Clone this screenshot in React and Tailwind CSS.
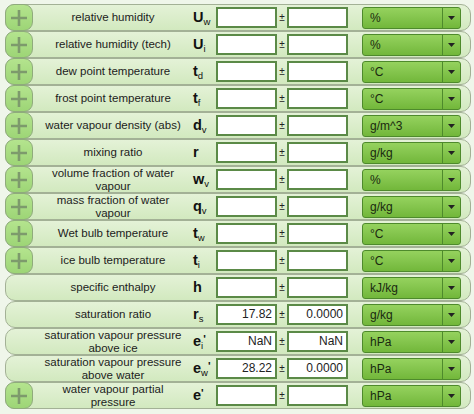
import React from "react";

const rows = [
  { label: "relative humidity", sym: "U", sub: "w", unit: "%", plus: true },
  { label: "relative humidity (tech)", sym: "U", sub: "i", unit: "%", plus: true },
  { label: "dew point temperature", sym: "t", sub: "d", unit: "°C", plus: true },
  { label: "frost point temperature", sym: "t", sub: "f", unit: "°C", plus: true },
  { label: "water vapour density (abs)", sym: "d", sub: "v", unit: "g/m^3", plus: true },
  { label: "mixing ratio", sym: "r", sub: "", unit: "g/kg", plus: true },
  { label: "volume fraction of water vapour", sym: "w", sub: "v", unit: "%", plus: true },
  { label: "mass fraction of water vapour", sym: "q", sub: "v", unit: "g/kg", plus: true },
  { label: "Wet bulb temperature", sym: "t", sub: "w", unit: "°C", plus: true },
  { label: "ice bulb temperature", sym: "t", sub: "i", unit: "°C", plus: true },
  { label: "specific enthalpy", sym: "h", sub: "", unit: "kJ/kg" },
  { label: "saturation ratio", sym: "r", sub: "s", unit: "g/kg", val: "17.82", err: "0.0000" },
  { label: "saturation vapour pressure above ice", sym: "e", sub: "i", prime: true, unit: "hPa", val: "NaN", err: "NaN" },
  { label: "saturation vapour pressure above water", sym: "e", sub: "w", prime: true, unit: "hPa", val: "28.22", err: "0.0000" },
  { label: "water vapour partial pressure", sym: "e", sub: "", prime: true, unit: "hPa", plus: true },
];

function PlusButton() {
  return (
    <div className="w-[28px] h-[27px] -my-px -ml-px rounded-[9px] border border-[#8fab7c] bg-gradient-to-b from-[#b4e48e] to-[#9dd576] flex items-center justify-center shrink-0">
      <svg width="18" height="18" viewBox="0 0 18 18">
        <path d="M9 1v16M1 9h16" stroke="#7d9a6c" strokeWidth="2.6" />
      </svg>
    </div>
  );
}

function Row({ r }) {
  return (
    <div className="h-[27px] rounded-[10px] border border-[#a3b196] bg-gradient-to-b from-[#e4f2d7] to-[#d2e9bf] flex items-center">
      {r.plus ? <PlusButton /> : <div className="w-[27px] shrink-0" />}
      <div className="ml-[5px] w-[150px] shrink-0 text-center text-[11.5px] leading-[13px] text-[#1c1c1c] px-[5px]">
        {r.label}
      </div>
      <div className="ml-[5px] w-[23px] shrink-0 text-[14.5px] font-bold text-[#111] leading-none whitespace-nowrap">
        {r.sym}
        {r.sub && <sub className="text-[9.5px] font-normal">{r.sub}</sub>}
        {r.prime && <span className="text-[11px] align-top">'</span>}
      </div>
      <div className="w-[61px] h-[21px] border-2 border-[#5b8a47] bg-white text-right text-[12px] leading-[17px] pr-[3px] text-[#222]">
        {r.val}
      </div>
      <div className="w-[10px] text-center text-[10px] text-[#222]">±</div>
      <div className="w-[61px] h-[21px] border-2 border-[#5b8a47] bg-white text-right text-[12px] leading-[17px] pr-[3px] text-[#222]">
        {r.err}
      </div>
      <div className="ml-[14px] w-[99px] h-[22px] rounded-[3px] border border-[#4e8a2c] bg-gradient-to-b from-[#95d25e] to-[#72b73a] flex">
        <div className="flex-1 text-[12px] leading-[20px] pl-[7px] text-[#1a2a10]">{r.unit}</div>
        <div className="w-[18px] border-l border-[#4e8a2c] flex items-center justify-center">
          <svg width="7" height="4" viewBox="0 0 7 4">
            <path d="M0 0h7L3.5 4z" fill="#222" />
          </svg>
        </div>
      </div>
    </div>
  );
}

export default function App() {
  return (
    <div
      className="w-[474px] h-[414px] bg-[#eff6ea] pt-[4px] pl-[5px] pr-[3px] overflow-hidden"
      style={{ fontFamily: '"Liberation Sans", Arial, sans-serif' }}
    >
      {rows.map((r, i) => (
        <Row key={i} r={r} />
      ))}
    </div>
  );
}
